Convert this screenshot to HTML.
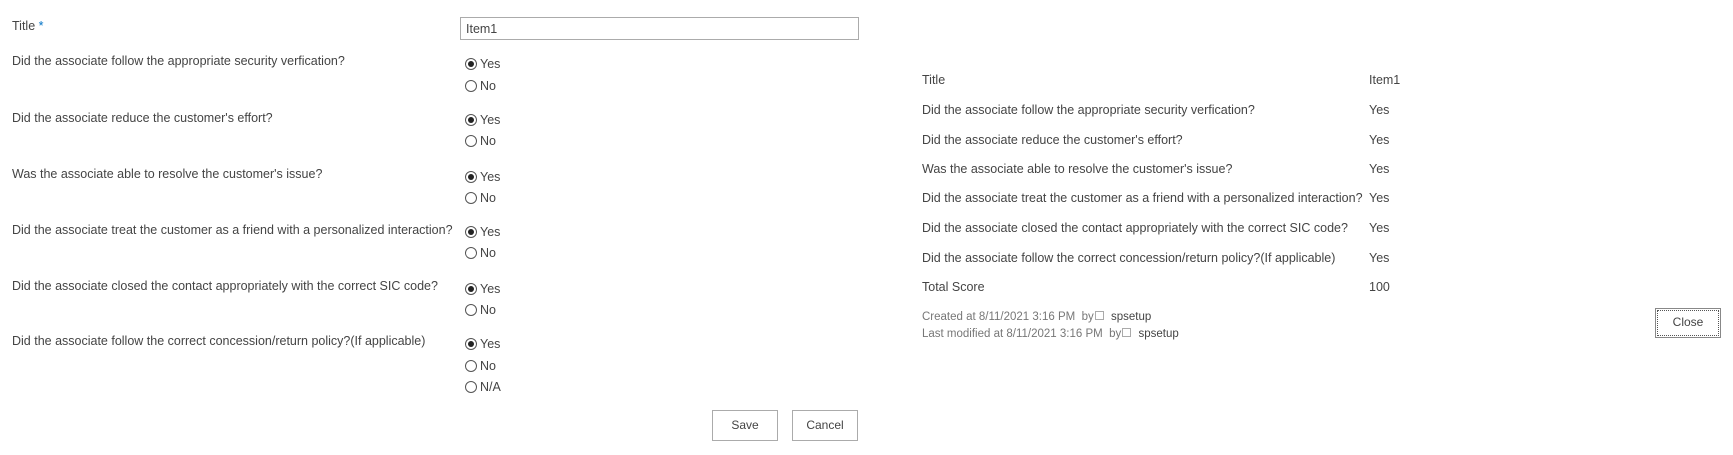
<!DOCTYPE html>
<html><head><meta charset="utf-8"><style>
*{margin:0;padding:0;box-sizing:border-box}
body{width:1733px;height:455px;background:#fff;font-family:"Liberation Sans",sans-serif;font-size:12.5px;color:#444;position:relative;overflow:hidden}
.a{position:absolute;white-space:nowrap;line-height:14px}
.r{position:absolute;width:12px;height:12px;border:1px solid #555;border-radius:50%;background:#fff}
.r.on::after{content:"";position:absolute;left:2px;top:2px;width:6px;height:6px;border-radius:50%;background:#222}
.btn{position:absolute;border:1px solid #ababab;background:#fff;text-align:center;font-size:12px;color:#444}
.m{color:#777}
.sq{display:inline-block;width:9px;height:9px;border:1px solid #aaa;margin:0 4px 0 1px;vertical-align:0}
</style></head><body>
<div class="a" style="left:12px;top:19px">Title <span style="color:#0072c6">*</span></div>
<div style="position:absolute;left:460px;top:17px;width:399px;height:23px;border:1px solid #ababab"></div>
<div class="a" style="left:466px;top:22px">Item1</div>

<div class="a" style="left:12px;top:54px">Did the associate follow the appropriate security verfication?</div>
<div class="a" style="left:12px;top:111px">Did the associate reduce the customer's effort?</div>
<div class="a" style="left:12px;top:167px">Was the associate able to resolve the customer's issue?</div>
<div class="a" style="left:12px;top:223px">Did the associate treat the customer as a friend with a personalized interaction?</div>
<div class="a" style="left:12px;top:279px">Did the associate closed the contact appropriately with the correct SIC code?</div>
<div class="a" style="left:12px;top:334px">Did the associate follow the correct concession/return policy?(If applicable)</div>

<div class="r on" style="left:465px;top:58px"></div><div class="a" style="left:480px;top:57px">Yes</div>
<div class="r" style="left:465px;top:80px"></div><div class="a" style="left:480px;top:79px">No</div>
<div class="r on" style="left:465px;top:114px"></div><div class="a" style="left:480px;top:113px">Yes</div>
<div class="r" style="left:465px;top:135px"></div><div class="a" style="left:480px;top:134px">No</div>
<div class="r on" style="left:465px;top:171px"></div><div class="a" style="left:480px;top:170px">Yes</div>
<div class="r" style="left:465px;top:192px"></div><div class="a" style="left:480px;top:191px">No</div>
<div class="r on" style="left:465px;top:226px"></div><div class="a" style="left:480px;top:225px">Yes</div>
<div class="r" style="left:465px;top:247px"></div><div class="a" style="left:480px;top:246px">No</div>
<div class="r on" style="left:465px;top:283px"></div><div class="a" style="left:480px;top:282px">Yes</div>
<div class="r" style="left:465px;top:304px"></div><div class="a" style="left:480px;top:303px">No</div>
<div class="r on" style="left:465px;top:338px"></div><div class="a" style="left:480px;top:337px">Yes</div>
<div class="r" style="left:465px;top:360px"></div><div class="a" style="left:480px;top:359px">No</div>
<div class="r" style="left:465px;top:381px"></div><div class="a" style="left:480px;top:380px">N/A</div>

<div class="btn" style="left:712px;top:410px;width:66px;height:31px;line-height:29px">Save</div>
<div class="btn" style="left:792px;top:410px;width:66px;height:31px;line-height:29px">Cancel</div>

<div class="a" style="left:922px;top:73px">Title</div><div class="a" style="left:1369px;top:73px">Item1</div>
<div class="a" style="left:922px;top:103px">Did the associate follow the appropriate security verfication?</div><div class="a" style="left:1369px;top:103px">Yes</div>
<div class="a" style="left:922px;top:133px">Did the associate reduce the customer's effort?</div><div class="a" style="left:1369px;top:133px">Yes</div>
<div class="a" style="left:922px;top:162px">Was the associate able to resolve the customer's issue?</div><div class="a" style="left:1369px;top:162px">Yes</div>
<div class="a" style="left:922px;top:191px">Did the associate treat the customer as a friend with a personalized interaction?</div><div class="a" style="left:1369px;top:191px">Yes</div>
<div class="a" style="left:922px;top:221px">Did the associate closed the contact appropriately with the correct SIC code?</div><div class="a" style="left:1369px;top:221px">Yes</div>
<div class="a" style="left:922px;top:251px">Did the associate follow the correct concession/return policy?(If applicable)</div><div class="a" style="left:1369px;top:251px">Yes</div>
<div class="a" style="left:922px;top:280px">Total Score</div><div class="a" style="left:1369px;top:280px">100</div>
<div class="a m" style="left:922px;top:310px;font-size:11.5px">Created at 8/11/2021 3:16 PM&nbsp; by<span class="sq"></span> <span style="color:#444">spsetup</span></div>
<div class="a m" style="left:922px;top:327px;font-size:11.5px">Last modified at 8/11/2021 3:16 PM&nbsp; by<span class="sq"></span> <span style="color:#444">spsetup</span></div>

<div class="btn" style="left:1655px;top:308px;width:66px;height:30px;line-height:26px;border:1px solid #888;outline:1px dotted #555;outline-offset:-3px">Close</div>
</body></html>
